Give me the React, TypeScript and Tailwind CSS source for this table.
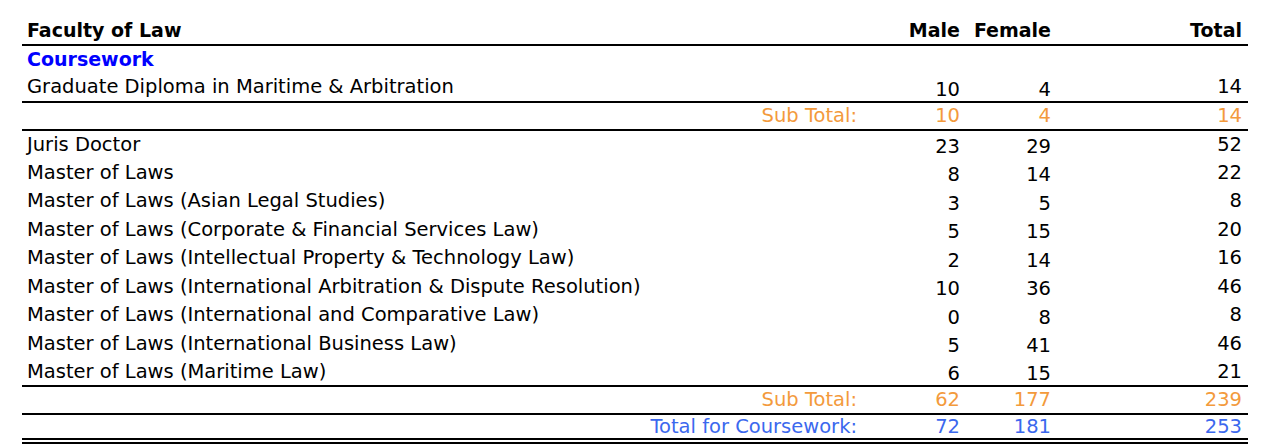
import React from "react";

const groups = [
  {
    rows: [{ name: "Graduate Diploma in Maritime & Arbitration", male: 10, female: 4, total: 14 }],
    sub: { male: 10, female: 4, total: 14 },
  },
  {
    rows: [
      { name: "Juris Doctor", male: 23, female: 29, total: 52 },
      { name: "Master of Laws", male: 8, female: 14, total: 22 },
      { name: "Master of Laws (Asian Legal Studies)", male: 3, female: 5, total: 8 },
      { name: "Master of Laws (Corporate & Financial Services Law)", male: 5, female: 15, total: 20 },
      { name: "Master of Laws (Intellectual Property & Technology Law)", male: 2, female: 14, total: 16 },
      { name: "Master of Laws (International Arbitration & Dispute Resolution)", male: 10, female: 36, total: 46 },
      { name: "Master of Laws (International and Comparative Law)", male: 0, female: 8, total: 8 },
      { name: "Master of Laws (International Business Law)", male: 5, female: 41, total: 46 },
      { name: "Master of Laws (Maritime Law)", male: 6, female: 15, total: 21 },
    ],
    sub: { male: 62, female: 177, total: 239 },
  },
];

const App = () => {
  return (
    <div className="bg-white w-[1268px] h-[447px] pt-[16px] pl-[22px] font-['DejaVu_Sans',Verdana,sans-serif] text-[19.5px] text-black">
      <table className="w-[1226px] border-collapse">
        <colgroup>
          <col className="w-[840px]" />
          <col className="w-[103px]" />
          <col className="w-[91px]" />
          <col />
        </colgroup>
        <thead>
          <tr className="h-[29px] border-b-2 border-black font-bold text-[19px]">
            <th className="text-left pl-[5px] align-middle leading-none">Faculty of Law</th>
            <th className="text-right pr-[5px] leading-none">Male</th>
            <th className="text-right pr-[5px] leading-none">Female</th>
            <th className="text-right pr-[6px] leading-none">Total</th>
          </tr>
        </thead>
        <tbody>
          <tr className="h-[28px]">
            <td colSpan={4} className="pl-[5px] font-bold text-[19px] leading-none text-[#0000ff]">
              Coursework
            </td>
          </tr>
          {groups.map((group, gi) => (
            <React.Fragment key={gi}>
              {group.rows.map((row, idx) => (
                <tr
                  key={idx}
                  className={
                    idx === group.rows.length - 1
                      ? "h-[28.5px] border-b-2 border-black"
                      : "h-[28.5px]"
                  }
                >
                  <td className="pl-[5px] leading-none">{row.name}</td>
                  <td className="text-right pr-[5px] pt-[5px] leading-none">{row.male}</td>
                  <td className="text-right pr-[5px] pt-[5px] leading-none">{row.female}</td>
                  <td className="text-right pr-[6px] leading-none">{row.total}</td>
                </tr>
              ))}
              <tr className="h-[28px] border-b-2 border-black text-[#f39a3c]">
                <td className="text-right pr-[5px] leading-none">Sub Total:</td>
                <td className="text-right pr-[5px] leading-none">{group.sub.male}</td>
                <td className="text-right pr-[5px] leading-none">{group.sub.female}</td>
                <td className="text-right pr-[6px] leading-none">{group.sub.total}</td>
              </tr>
            </React.Fragment>
          ))}
          <tr className="h-[27px] border-b-[6px] border-double border-black text-[#3b68ee]">
            <td className="text-right pr-[5px] leading-none">Total for Coursework:</td>
            <td className="text-right pr-[5px] leading-none">72</td>
            <td className="text-right pr-[5px] leading-none">181</td>
            <td className="text-right pr-[6px] leading-none">253</td>
          </tr>
        </tbody>
      </table>
    </div>
  );
};

export default App;
